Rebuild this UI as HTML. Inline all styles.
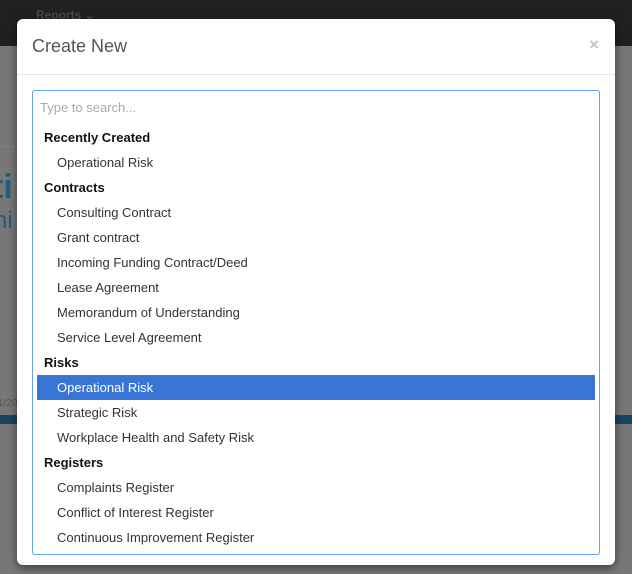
<!DOCTYPE html>
<html><head><meta charset="utf-8"><style>
*{box-sizing:border-box;margin:0;padding:0}
body{width:632px;height:574px;overflow:hidden;background:#777;font-family:"Liberation Sans",sans-serif;position:relative}
.top{position:absolute;left:0;top:0;width:632px;height:46px;background:#202020}
.rep{position:absolute;left:36px;top:8px;color:#3d4a55;font-weight:bold;font-size:12px}
.bg1{position:absolute;left:-8px;top:168px;color:#1f5f7d;font-size:34px;font-weight:bold}
.bg2{position:absolute;left:-6px;top:207px;color:#1f5f7d;font-size:24px}
.bar{position:absolute;left:0;top:415px;width:632px;height:9px;background:#1a4560}
.dt{position:absolute;left:-2px;top:398px;color:#555;font-size:10px}
.line{position:absolute;left:0;top:146px;width:20px;border-top:1px dashed #888}
.modal{position:absolute;left:17px;top:19px;width:598px;height:546px;background:#fff;border-radius:6px;box-shadow:0 3px 9px rgba(0,0,0,.5)}
.hd{height:56px;border-bottom:1px solid #e5e5e5;position:relative}
.hd h1{position:absolute;left:15px;top:17px;font-weight:normal;font-size:18px;color:#555}
.x{position:absolute;right:16px;top:16px;color:#c4c4c4;font-size:17px;font-weight:bold}
.box{position:absolute;left:15px;top:71px;width:568px;height:465px;border:1px solid #66a3f0;border-radius:3px}
.search{height:34px;padding:9px 0 0 7px;color:#aaa;font-size:13px}
.it{height:25px;line-height:25px;font-size:13px;color:#333;padding-left:20px;margin:0 4px}
.h{font-weight:bold;color:#111;padding-left:7px}
.sel{background:#3875d7;color:#fff}
</style></head><body>
<div class="top"><div class="rep">Reports ⌄</div></div>
<div class="line"></div>
<div class="bg1">ti</div><div class="bg2">ni</div>
<div class="dt">1/20</div>
<div class="bar"></div>
<div class="modal">
<div class="hd"><h1>Create New</h1><span class="x">×</span></div>
<div class="box">
<div class="search">Type to search...</div>
<div class="it h">Recently Created</div>
<div class="it">Operational Risk</div>
<div class="it h">Contracts</div>
<div class="it">Consulting Contract</div>
<div class="it">Grant contract</div>
<div class="it">Incoming Funding Contract/Deed</div>
<div class="it">Lease Agreement</div>
<div class="it">Memorandum of Understanding</div>
<div class="it">Service Level Agreement</div>
<div class="it h">Risks</div>
<div class="it sel">Operational Risk</div>
<div class="it">Strategic Risk</div>
<div class="it">Workplace Health and Safety Risk</div>
<div class="it h">Registers</div>
<div class="it">Complaints Register</div>
<div class="it">Conflict of Interest Register</div>
<div class="it">Continuous Improvement Register</div>
</div>
</div>
</body></html>
